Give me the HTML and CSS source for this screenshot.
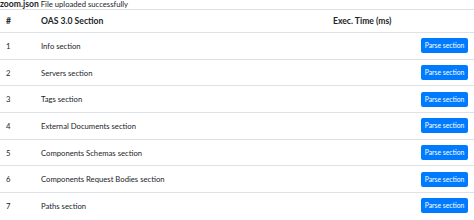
FILE: index.html
```html
<!DOCTYPE html>
<html lang="en">

<head>
  <meta charset="UTF-8">
  <meta name="viewport" content="width=device-width, initial-scale=1.0">
  <title>OAS sections</title>
  <link rel="stylesheet" href="styles.css">
</head>

<body>

  <div class="upload-status"><b>zoom.json</b> File uploaded successfully</div>

  <table class="section-table">
    <colgroup>
      <col class="col-num">
      <col class="col-name">
      <col class="col-time">
      <col class="col-action">
    </colgroup>
    <thead>
      <tr>
        <th>#</th>
        <th>OAS 3.0 Section</th>
        <th>Exec. Time (ms)</th>
        <th></th>
      </tr>
    </thead>
    <tbody>
      <tr>
        <td>1</td>
        <td>Info section</td>
        <td></td>
        <td><button class="btn-parse">Parse section</button></td>
      </tr>
      <tr>
        <td>2</td>
        <td>Servers section</td>
        <td></td>
        <td><button class="btn-parse">Parse section</button></td>
      </tr>
      <tr>
        <td>3</td>
        <td>Tags section</td>
        <td></td>
        <td><button class="btn-parse">Parse section</button></td>
      </tr>
      <tr>
        <td>4</td>
        <td>External Documents section</td>
        <td></td>
        <td><button class="btn-parse">Parse section</button></td>
      </tr>
      <tr>
        <td>5</td>
        <td>Components Schemas section</td>
        <td></td>
        <td><button class="btn-parse">Parse section</button></td>
      </tr>
      <tr>
        <td>6</td>
        <td>Components Request Bodies section</td>
        <td></td>
        <td><button class="btn-parse">Parse section</button></td>
      </tr>
      <tr>
        <td>7</td>
        <td>Paths section</td>
        <td></td>
        <td><button class="btn-parse">Parse section</button></td>
      </tr>
    </tbody>
  </table>

</body>

</html>
```

FILE: styles.css
```css
body {
  margin: 0;
  font-family: Lato, "Open Sans", sans-serif;
  font-size: 7.7px;
  color: #212529;
  background: #fff;
}

.upload-status {
  height: 9px;
  line-height: 9px;
  white-space: nowrap;
}

.upload-status b {
  font-size: 8.6px;
  font-weight: 700;
}

/* テーブル */
.section-table {
  width: 474px;
  border-collapse: collapse;
  table-layout: fixed;
}

.col-num {
  width: 35px;
}

.col-name {
  width: 292px;
}

.col-time {
  width: 88px;
}

.col-action {
  width: 59px;
}

.section-table th,
.section-table td {
  padding: 0 6px;
  border-top: 1px solid #dee2e6;
  text-align: left;
  vertical-align: middle;
  white-space: nowrap;
}

.section-table th {
  height: 22px;
  font-size: 8.6px;
  font-weight: 700;
  border-bottom: 1px solid #dee2e6;
}

.section-table td {
  height: 25.7px;
}

.section-table tbody tr:first-child td {
  border-top: none;
}

.btn-parse {
  display: block;
  width: 47px;
  height: 15px;
  padding: 0;
  margin-left: auto;
  border: none;
  border-radius: 2px;
  background: #007bff;
  color: #fff;
  font-family: inherit;
  font-size: 6.8px;
  line-height: 15px;
  text-align: center;
  white-space: nowrap;
  cursor: pointer;
}
```
